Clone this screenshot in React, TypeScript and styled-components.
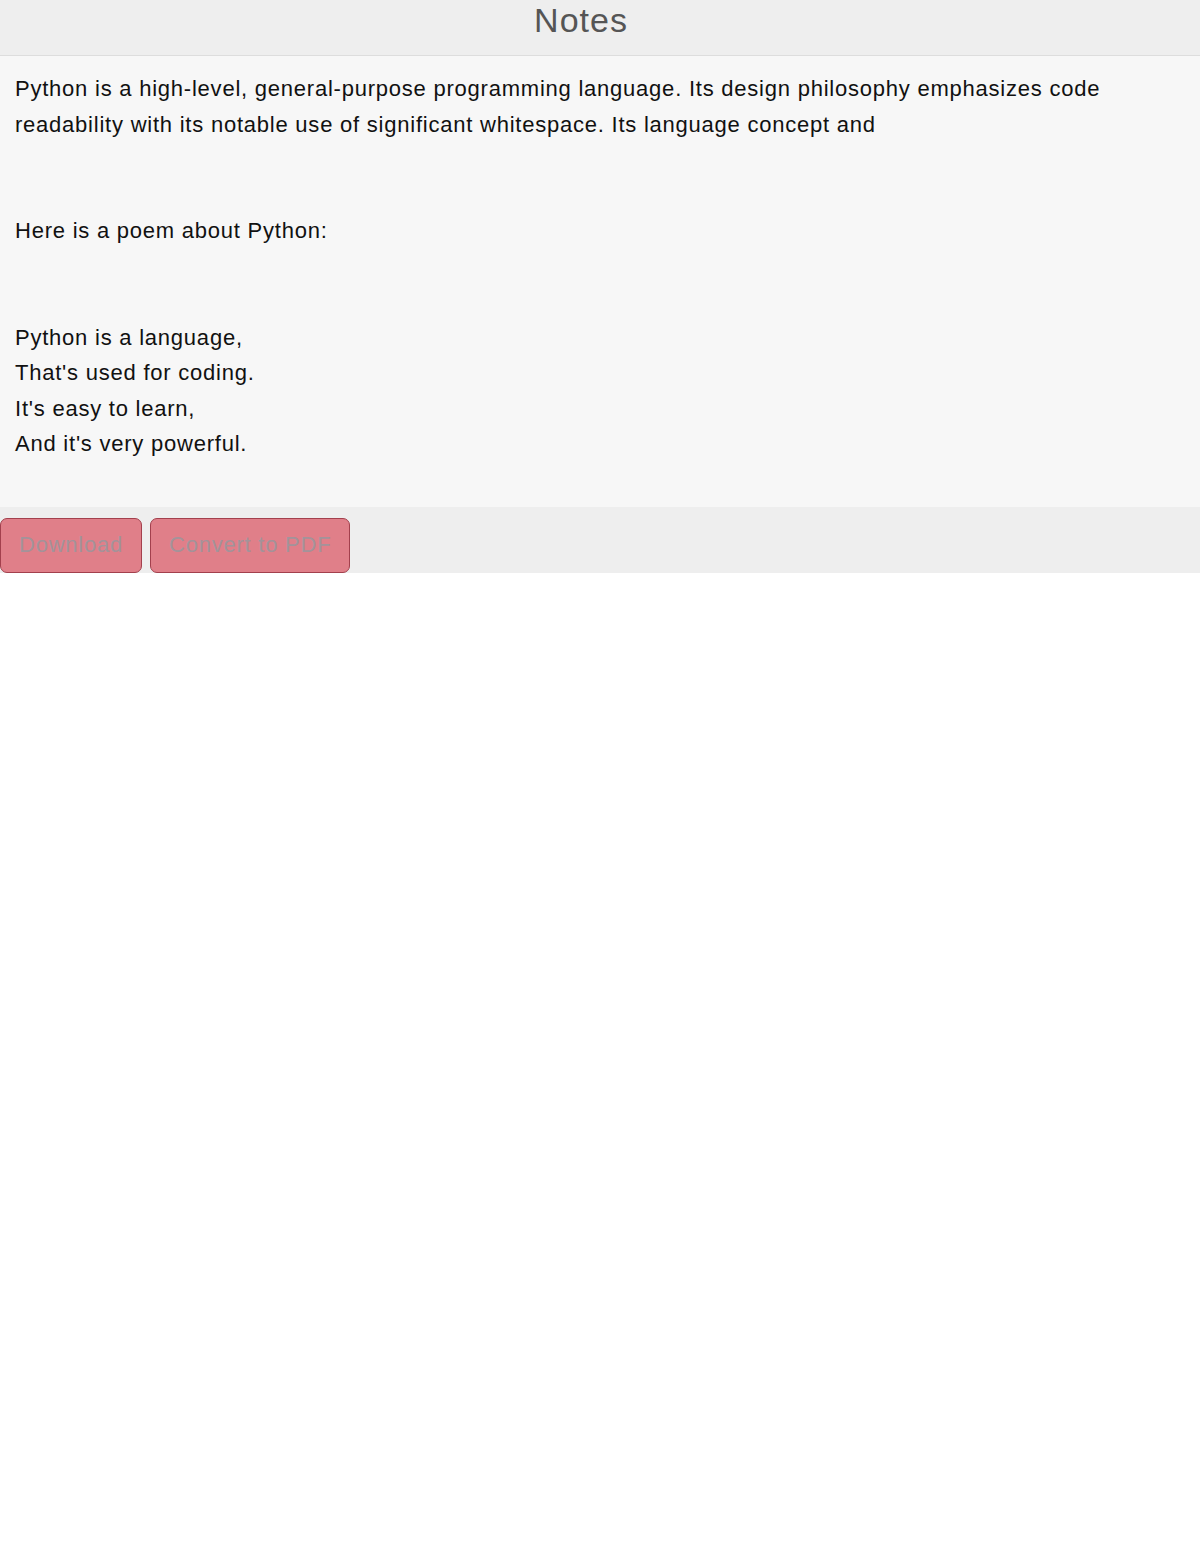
import React from "react";
import styled, { createGlobalStyle } from "styled-components";

const GlobalStyle = createGlobalStyle`
  body {
    margin: 0;
    background: #ffffff;
    font-family: "Liberation Sans", Arial, sans-serif;
  }
`;

const noteText = `Python is a high-level, general-purpose programming language. Its design philosophy emphasizes code readability with its notable use of significant whitespace. Its language concept and


Here is a poem about Python:


Python is a language,
That's used for coding.
It's easy to learn,
And it's very powerful.`;

const App: React.FC = () => {
  return (
    <Page>
      <GlobalStyle />
      <Header>
        <Title>Notes</Title>
      </Header>
      <NoteBody>{noteText}</NoteBody>
      <Footer>
        <ActionButton disabled>Download</ActionButton>
        <ActionButton disabled>Convert to PDF</ActionButton>
      </Footer>
    </Page>
  );
};

export default App;

const Page = styled.div`
  display: flex;
  flex-direction: column;
`;

const Header = styled.header`
  height: 55px;
  background: #eeeeee;
  border-bottom: 1px solid #dddddd;
  display: flex;
  justify-content: center;
  align-items: flex-start;
`;

const Title = styled.h1`
  margin: 0 38px 0 0;
  font-size: 34px;
  font-weight: normal;
  letter-spacing: 1px;
  color: #555555;
  line-height: 40px;
`;

const NoteBody = styled.div`
  background: #f7f7f7;
  padding: 15px 15px 45px;
  font-size: 22px;
  letter-spacing: 0.77px;
  line-height: 35.5px;
  color: #111111;
  white-space: pre-wrap;
`;

const Footer = styled.div`
  background: #eeeeee;
  padding-top: 11px;
  display: flex;
  gap: 8px;
`;

const ActionButton = styled.button`
  height: 55px;
  padding: 0 18px;
  background: #e07f89;
  border: 1px solid #a3404d;
  border-radius: 7px;
  color: #a3939a;
  font-family: "Liberation Sans", Arial, sans-serif;
  font-size: 22px;
  letter-spacing: 0.77px;
`;
